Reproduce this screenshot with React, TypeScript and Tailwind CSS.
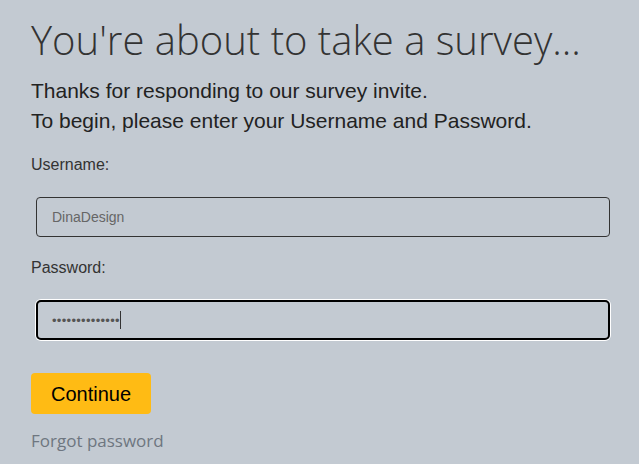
export default function App() {
  return (
    <div className="min-h-screen w-full bg-[#c3cad2] pl-[31px] pt-[14px]" style={{ fontFamily: '"Liberation Sans", Arial, sans-serif' }}>
      <h1 className="text-[40px] font-light leading-[52px] text-[#333]" style={{ fontFamily: '"Open Sans", sans-serif' }}>
        You're about to take a survey...
      </h1>
      <div className="mt-[10px] text-[21px] leading-[30px] text-[#222]">
        <p>Thanks for responding to our survey invite.</p>
        <p>To begin, please enter your Username and Password.</p>
      </div>

      <label className="mt-[19px] block text-[16px] leading-[20px] text-[#333]">Username:</label>
      <input
        readOnly
        value="DinaDesign"
        className="ml-[5px] mt-[22px] block h-[40px] w-[574px] rounded-[4px] border border-[#333] bg-transparent px-[15px] text-[14px] text-[#666] outline-none"
      />

      <label className="mt-[21px] block text-[16px] leading-[20px] text-[#333]">Password:</label>
      <div className="relative ml-[5px] mt-[22px] w-[574px]">
        <input
          readOnly
          type="password"
          value="abcdefghijklmn"
          className="block h-[40px] w-full rounded-[5px] border-2 border-black bg-transparent px-[14px] text-[13px] tracking-[0.3px] text-[#555] shadow-[0_0_0_1px_#fff] outline-none"
        />
        <span className="absolute left-[84px] top-[11px] h-[18px] w-px bg-[#333]" />
      </div>

      <button className="mt-[33px] block h-[41px] w-[120px] rounded-[4px] bg-[#ffbb14] text-[20px] text-black">
        Continue
      </button>
      <a className="mt-[14px] block text-[17px] text-[#6e7680]" style={{ fontFamily: '"Open Sans", sans-serif' }}>
        Forgot password
      </a>
    </div>
  )
}
